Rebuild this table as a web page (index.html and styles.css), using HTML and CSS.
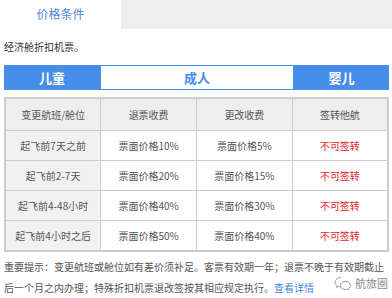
FILE: index.html
```html
<!DOCTYPE html>
<html lang="zh">
<head>
<meta charset="utf-8">
<link rel="stylesheet" href="styles.css">
</head>
<body>
<div class="page">
  <div class="topbar">
    <div class="toptab">价格条件</div>
    <div class="toprest"></div>
  </div>
  <div class="intro">经济舱折扣机票。</div>
  <div class="tabs">
    <div class="tab tab-on tab-child">儿童</div>
    <div class="tab tab-off tab-adult">成人</div>
    <div class="tab tab-on tab-infant">婴儿</div>
  </div>
  <table class="rules">
    <tr class="head">
      <th>变更航班/舱位</th><th>退票收费</th><th>更改收费</th><th>签转他航</th>
    </tr>
    <tr><td class="first">起飞前7天之前</td><td>票面价格10%</td><td>票面价格5%</td><td class="red">不可签转</td></tr>
    <tr><td class="first">起飞前2-7天</td><td>票面价格20%</td><td>票面价格15%</td><td class="red">不可签转</td></tr>
    <tr><td class="first">起飞前4-48小时</td><td>票面价格40%</td><td>票面价格30%</td><td class="red">不可签转</td></tr>
    <tr><td class="first">起飞前4小时之后</td><td>票面价格50%</td><td>票面价格40%</td><td class="red">不可签转</td></tr>
  </table>
  <div class="note">重要提示：变更航班或舱位如有差价须补足。客票有效期一年；退票不晚于有效期截止后一个月之内办理；特殊折扣机票退改签按其相应规定执行。<span class="link">查看详情</span></div>
  <div class="watermark">
    <svg class="wm-icon" width="18" height="14" viewBox="0 0 18 14">
      <path d="M7 1.5c-3.3 0-6 2.1-6 4.7 0 1.4.8 2.7 2.1 3.6l-.5 1.7 2-1c.8.3 1.6.4 2.4.4" fill="none" stroke="#9a9a9a" stroke-width="1"/>
      <path d="M11.5 5.5c-3 0-5.3 1.8-5.3 4s2.3 4 5.3 4c.6 0 1.2-.1 1.8-.3l1.7.9-.4-1.5c1.2-.7 2-1.8 2-3.1 0-2.2-2.3-4-5.1-4z" fill="none" stroke="#9a9a9a" stroke-width="1"/>
    </svg>
    <span class="wm-text">航旅圈</span>
  </div>
</div>
</body>
</html>
```
FILE: styles.css
```css
html, body {
  margin: 0;
  padding: 0;
  background: #ffffff;
}
.page {
  position: relative;
  width: 392px;
  height: 298px;
  overflow: hidden;
  font-family: "Noto Sans CJK SC", "Noto Sans", sans-serif;
  color: #555555;
}
.topbar {
  display: flex;
  height: 29px;
}
.toptab {
  width: 121px;
  background: #ffffff;
  color: #4a87d6;
  font-size: 12px;
  line-height: 27px;
  text-align: center;
  padding-left: 0;
}
.toprest {
  flex: 1;
  background: #eeeeee;
}
.intro {
  margin-top: 8px;
  padding-left: 4px;
  font-size: 10px;
  line-height: 20px;
  color: #333333;
}
.tabs {
  display: flex;
  margin: 8px 3px 0 4px;
  height: 25px;
}
.tab {
  font-size: 13px;
  font-weight: bold;
  line-height: 25px;
  text-align: center;
  box-sizing: border-box;
}
.tab-on {
  background: #478ee8;
  color: #ffffff;
}
.tab-off {
  background: #ffffff;
  color: #478ee8;
  border: 1px solid #478ee8;
  line-height: 23px;
}
.tab-child { width: 96px; }
.tab-adult { width: 194px; }
.tab-infant { flex: 1; }
.rules {
  margin: 7px 3px 0 4px;
  width: 385px;
  border-collapse: collapse;
  border: 2px solid #cccccc;
  table-layout: fixed;
  font-size: 10px;
  color: #555555;
}
.rules th, .rules td {
  border: 1px solid #cccccc;
  text-align: center;
  font-weight: normal;
  padding: 0;
}
.rules th {
  height: 31px;
  background: #eeeeee;
}
.rules td {
  height: 29px;
  background: #ffffff;
}
.rules td.first {
  background: #f1f1f1;
}
.rules td.red {
  color: #e8242a;
}
.note {
  margin: 4px 3px 0 4px;
  font-size: 10px;
  line-height: 21px;
  color: #555555;
}
.link {
  color: #3f86e0;
}
.watermark {
  position: absolute;
  left: 334px;
  top: 275px;
  display: flex;
  align-items: center;
  gap: 3px;
}
.wm-text {
  font-size: 11px;
  color: #8c8c8c;
  text-shadow: 0 0 2px #ffffff, 0 0 2px #ffffff;
}
```
